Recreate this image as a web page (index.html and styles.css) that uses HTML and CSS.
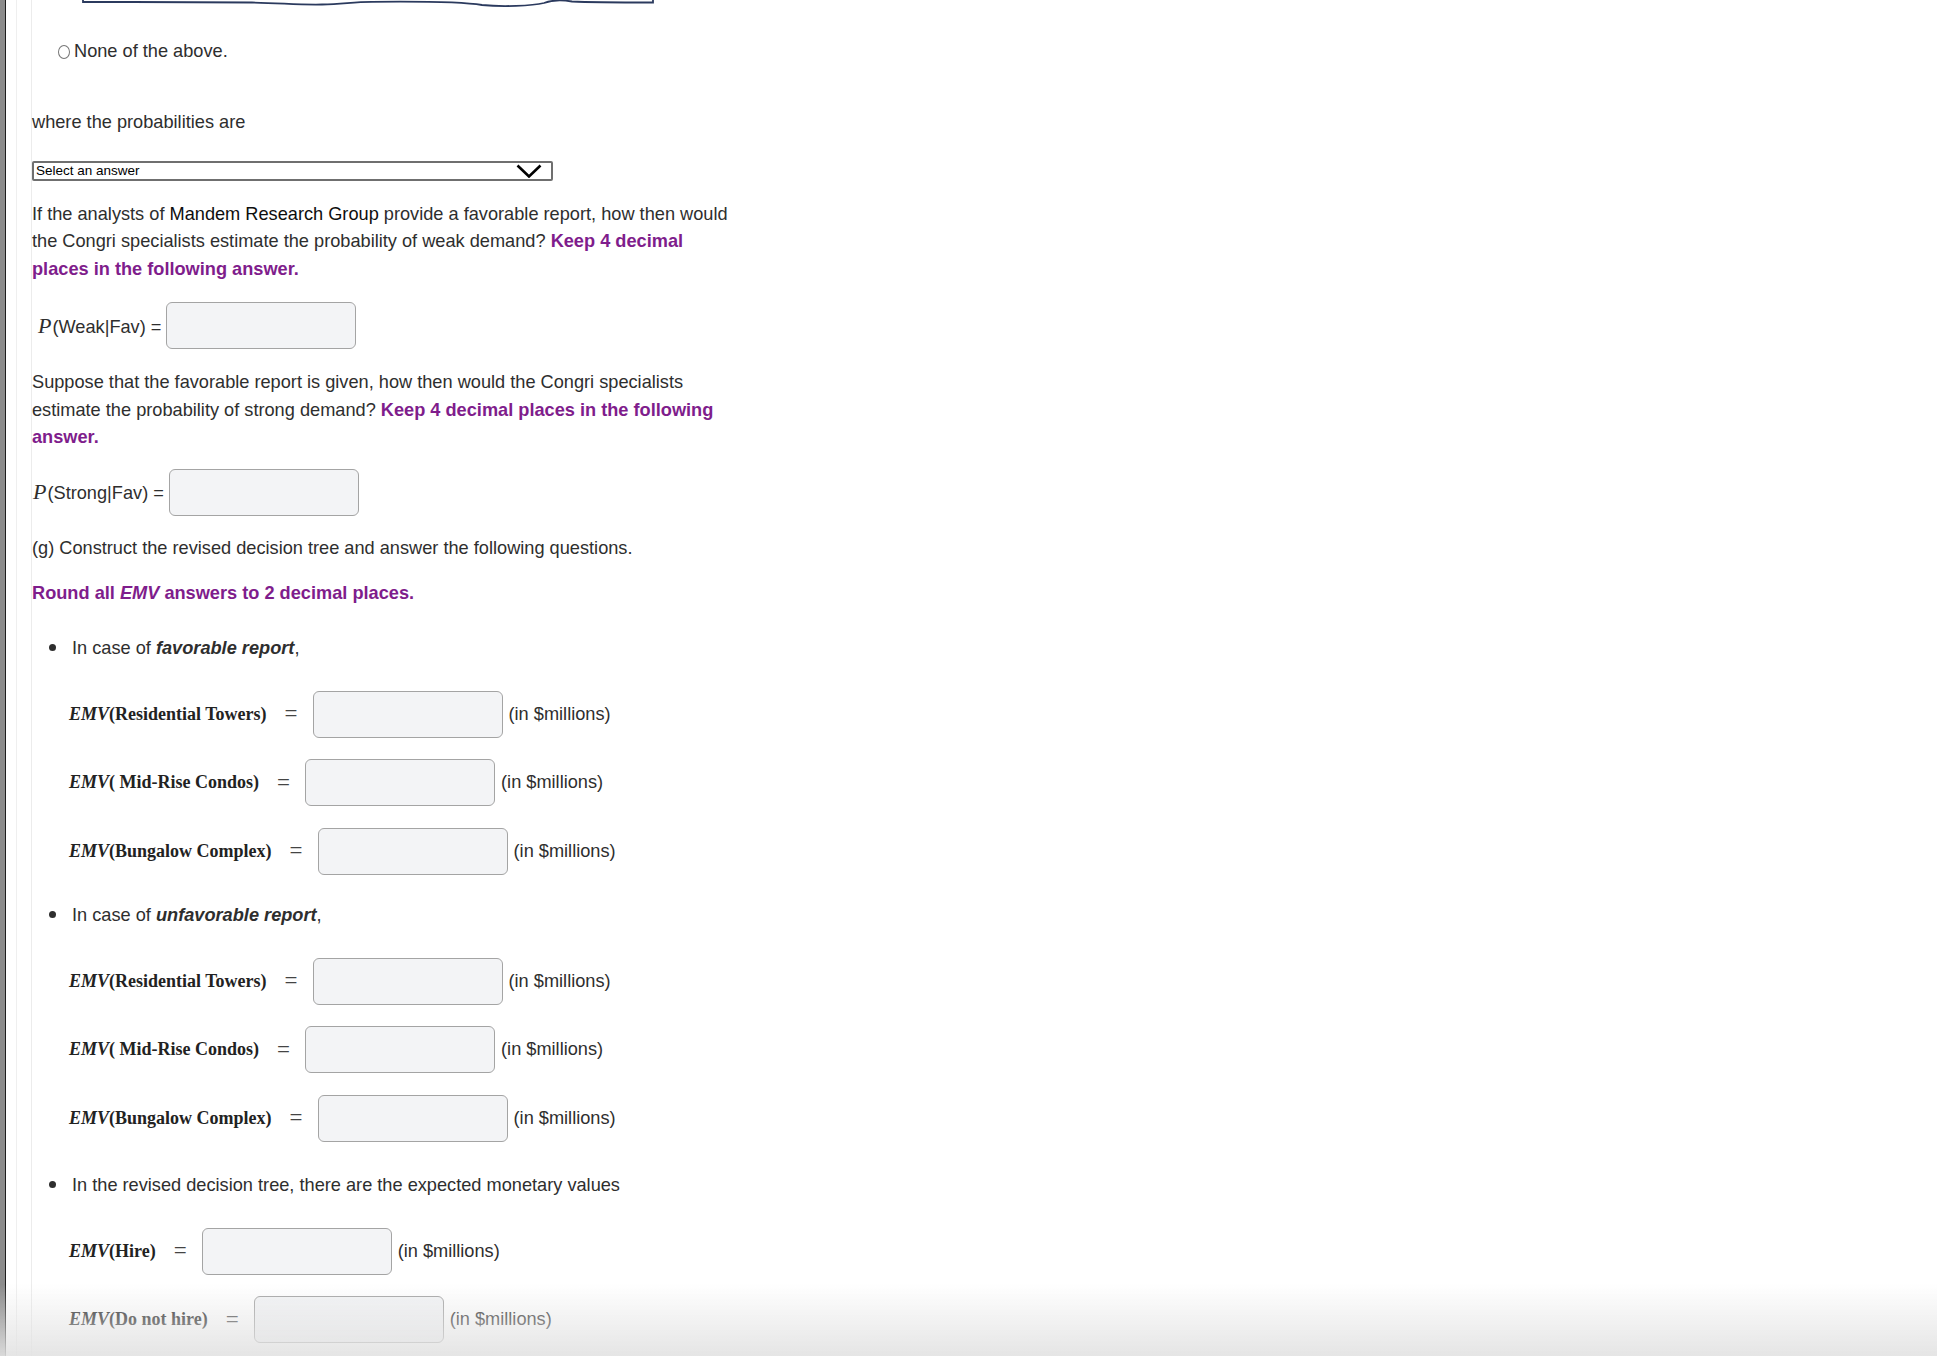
FILE: index.html
```html
<!DOCTYPE html>
<html lang="en">
<head>
    <meta charset="UTF-8">
    <title>Decision Tree Question</title>
    <link rel="stylesheet" href="styles.css">
</head>
<body>
    <div class="page">
        <div class="wave">
            <svg width="572" height="10" viewBox="0 0 572 10">
                <path d="M1 0 V3 C 60 3, 130 3, 170 3.5 C 200 4, 215 6, 240 5.5 C 262 5, 270 3, 290 2.8 C 330 2.4, 380 2.6, 400 6 C 420 8, 450 7, 462 4 C 470 1, 478 0.5, 490 2.5 C 510 3.5, 550 3.5, 571 3.5 V0"
                      fill="none" stroke="#2b3a5e" stroke-width="1.8"/>
            </svg>
        </div>

        <div class="radio-row">
            <span class="radio"></span>None of the above.
        </div>

        <p class="text where">where the probabilities are</p>

        <div class="select">
            <span>Select an answer</span>
            <svg width="26" height="14" viewBox="0 0 26 14"><path d="M1.5 1.5 L13 12.5 L24.5 1.5" fill="none" stroke="#000" stroke-width="2.6"/></svg>
        </div>

        <p class="text para">If the analysts of <span class="name">Mandem Research Group</span> provide a favorable report, how then would the Congri specialists estimate the probability of weak demand? <b class="hint">Keep 4 decimal places in the following answer.</b></p>

        <div class="prob-row weak">
            <span class="label"><i class="math-p">P</i>(Weak|Fav) =</span>
            <input type="text" class="box">
        </div>

        <p class="text para">Suppose that the favorable report is given, how then would the Congri specialists estimate the probability of strong demand? <b class="hint">Keep 4 decimal places in the following answer.</b></p>

        <div class="prob-row">
            <span class="label"><i class="math-p">P</i>(Strong|Fav) =</span>
            <input type="text" class="box">
        </div>

        <p class="text part">(g) Construct the revised decision tree and answer the following questions.</p>

        <p class="text round hint"><b>Round all <i>EMV</i> answers to 2 decimal places.</b></p>

        <ul class="cases">
            <li>In case of <b><i>favorable report</i></b>,</li>
        </ul>
        <div class="emv-list">
            <div class="emv-row"><span class="emv"><i>EMV</i>(Residential Towers)</span><span class="eq">=</span><input type="text" class="box"><span class="unit">(in $millions)</span></div>
            <div class="emv-row"><span class="emv"><i>EMV</i>( Mid-Rise Condos)</span><span class="eq">=</span><input type="text" class="box"><span class="unit">(in $millions)</span></div>
            <div class="emv-row"><span class="emv"><i>EMV</i>(Bungalow Complex)</span><span class="eq">=</span><input type="text" class="box"><span class="unit">(in $millions)</span></div>
        </div>

        <ul class="cases">
            <li>In case of <b><i>unfavorable report</i></b>,</li>
        </ul>
        <div class="emv-list">
            <div class="emv-row"><span class="emv"><i>EMV</i>(Residential Towers)</span><span class="eq">=</span><input type="text" class="box"><span class="unit">(in $millions)</span></div>
            <div class="emv-row"><span class="emv"><i>EMV</i>( Mid-Rise Condos)</span><span class="eq">=</span><input type="text" class="box"><span class="unit">(in $millions)</span></div>
            <div class="emv-row"><span class="emv"><i>EMV</i>(Bungalow Complex)</span><span class="eq">=</span><input type="text" class="box"><span class="unit">(in $millions)</span></div>
        </div>

        <ul class="cases third">
            <li>In the revised decision tree, there are the expected monetary values</li>
        </ul>
        <div class="emv-list">
            <div class="emv-row"><span class="emv"><i>EMV</i>(Hire)</span><span class="eq">=</span><input type="text" class="box"><span class="unit">(in $millions)</span></div>
            <div class="emv-row"><span class="emv"><i>EMV</i>(Do not hire)</span><span class="eq">=</span><input type="text" class="box"><span class="unit">(in $millions)</span></div>
        </div>
    </div>

    <div class="fade"></div>
</body>
</html>
```

FILE: styles.css
```css
body{
    margin: 0;
    min-height: 100vh;
    font-family: "Liberation Sans", Arial, sans-serif;
    font-size: 18.2px;
    color: #2e2e2e;
    background: linear-gradient(to right, #8c8c8c 0 5px, #1e1e1e 5px 6px, #fff 6px 16px, #efefef 16px 17px, #fff 17px);
}
.page{
    margin-left: 31px;
    border-left: 1px solid #ececec;
    min-height: 100vh;
    width: 698px;
}
.wave{
    margin-left: 50px;
    height: 8px;
    overflow: hidden;
}
.wave svg{
    display: block;
    margin-top: -1px;
}
.text{
    margin: 0;
    line-height: 27.5px;
}
.radio-row{
    margin-top: 30px;
    padding-left: 26px;
    line-height: 27px;
    display: flex;
    align-items: center;
}
.radio{
    display: inline-block;
    width: 10px;
    height: 12px;
    border: 1px solid #777;
    border-radius: 50%;
    margin-right: 4px;
}
.where{
    margin-top: 44px;
}
.select{
    margin-top: 24px;
    width: 506px;
    height: 16px;
    border: 2px solid #6f6f6f;
    border-radius: 2px;
    display: flex;
    align-items: center;
    justify-content: space-between;
    padding-left: 2px;
    padding-right: 9px;
    font-size: 13.5px;
    color: #000;
}
.select svg{
    display: block;
}
.para{
    margin-top: 20px;
}
.name{
    color: #0e0e0e;
}
.hint{
    color: #7f1d8c;
}
.prob-row{
    margin-top: 17px;
    display: flex;
    align-items: center;
    gap: 5px;
    padding-left: 1px;
}
.prob-row.weak{
    margin-top: 19px;
    padding-left: 6px;
}
.math-p{
    font-family: "Liberation Serif", "Times New Roman", serif;
    font-size: 22px;
    margin-right: 1px;
}
.box{
    width: 190px;
    height: 47px;
    box-sizing: border-box;
    border: 1px solid #a4a4a4;
    border-radius: 6px;
    background: #f3f4f6;
    margin: 0;
}
.part{
    margin-top: 19px;
}
.round{
    margin-top: 18px;
}
.cases{
    margin: 27px 0 0;
    padding-left: 40px;
    line-height: 27px;
    list-style: none;
}
.cases li::before{
    content: "";
    display: inline-block;
    width: 7px;
    height: 7px;
    border-radius: 50%;
    background: #2e2e2e;
    margin-left: -23px;
    margin-right: 16px;
    vertical-align: 3px;
}
.cases.third{
    margin-top: 30px;
}
.emv-list{
    margin-top: 29px;
    padding-left: 37px;
    display: flex;
    flex-direction: column;
    gap: 21.5px;
}
.emv-row{
    display: flex;
    align-items: center;
}
.emv{
    font-family: "Liberation Serif", "Times New Roman", serif;
    font-weight: bold;
    font-size: 18px;
    color: #222;
}
.eq{
    font-family: "Liberation Serif", "Times New Roman", serif;
    font-size: 23px;
    color: #444;
    margin: 0 15px 0 18px;
}
.unit{
    margin-left: 6px;
}
.fade{
    position: fixed;
    left: 0;
    right: 0;
    bottom: 0;
    height: 72px;
    background: linear-gradient(to bottom, rgba(230, 230, 230, 0), rgba(226, 226, 226, 0.9));
    pointer-events: none;
}
```
